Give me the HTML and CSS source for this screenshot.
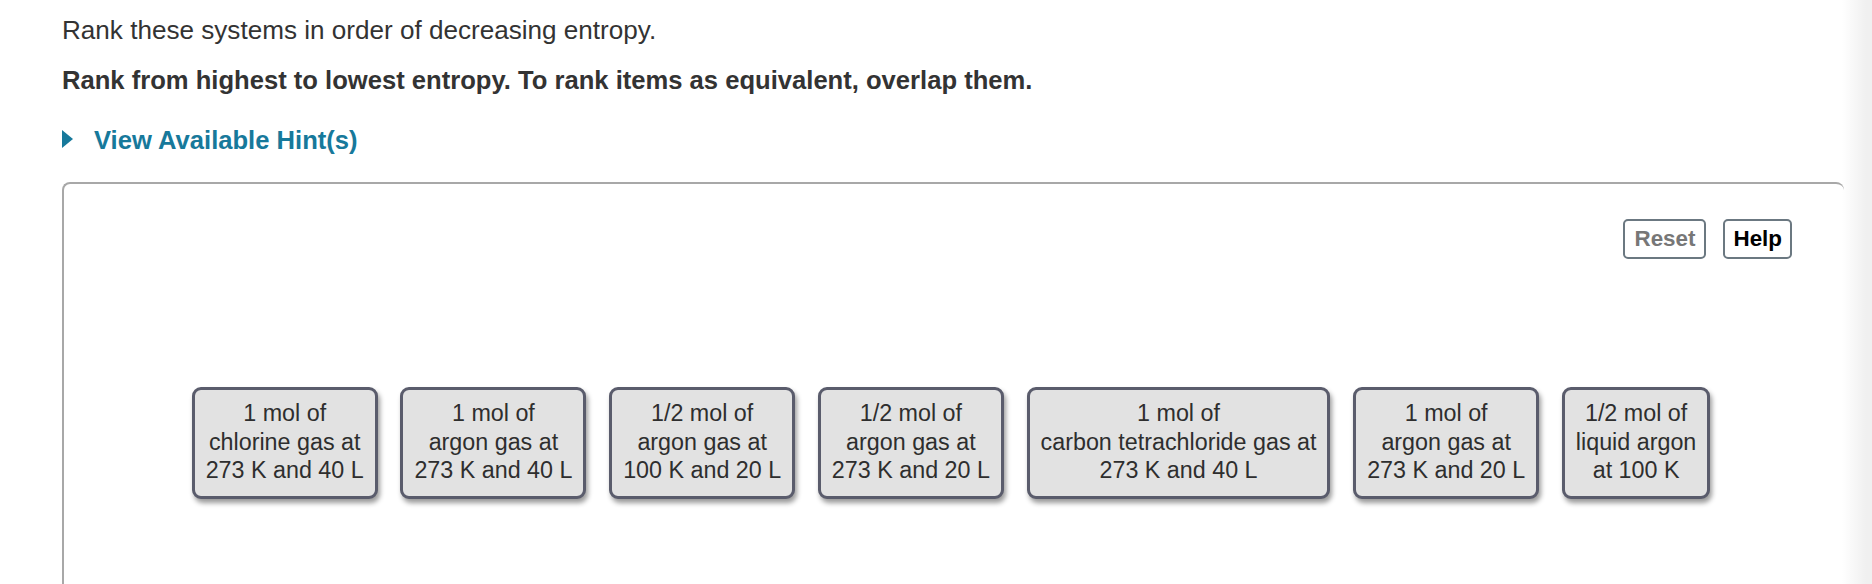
FILE: index.html
```html
<!DOCTYPE html>
<html lang="en">
<head>
    <meta charset="UTF-8">
    <meta name="viewport" content="width=device-width, initial-scale=1.0">
    <title>Ranking: Entropy</title>
    <link rel="stylesheet" href="styles.css">
</head>
<body>
    <div class="page">
        <p class="prompt">Rank these systems in order of decreasing entropy.</p>
        <p class="instructions">Rank from highest to lowest entropy. To rank items as equivalent, overlap them.</p>

        <a class="hint-toggle" href="#"><span class="arrow"></span>View Available Hint(s)</a>

        <!-- Ranking area -->
        <div class="ranking">
            <div class="toolbar">
                <button class="btn btn-reset">Reset</button>
                <button class="btn btn-help">Help</button>
            </div>
            <div class="items">
                <div class="item">1 mol of<br>chlorine gas at<br>273 K and 40 L</div>
                <div class="item">1 mol of<br>argon gas at<br>273 K and 40 L</div>
                <div class="item">1/2 mol of<br>argon gas at<br>100 K and 20 L</div>
                <div class="item">1/2 mol of<br>argon gas at<br>273 K and 20 L</div>
                <div class="item">1 mol of<br>carbon tetrachloride gas at<br>273 K and 40 L</div>
                <div class="item">1 mol of<br>argon gas at<br>273 K and 20 L</div>
                <div class="item">1/2 mol of<br>liquid argon<br>at 100 K</div>
            </div>
        </div>
    </div>
</body>
</html>
```

FILE: styles.css
```css
html, body {
    height: 100%;
}
body {
    margin: 0;
    font-family: "Liberation Sans", Arial, Helvetica, sans-serif;
    color: #333;
    background: linear-gradient(90deg, #fff calc(100% - 30px), #f0f0f0 calc(100% - 6px));
    overflow: hidden;
}
.page {
    padding: 16px 28px 0 62px;
}
.prompt, .instructions {
    margin: 0;
    font-size: 25.6px;
    line-height: 29px;
}
.prompt {
    font-size: 26.1px;
}
.instructions {
    margin-top: 21px;
    font-weight: bold;
}

/* hint link */
.hint-toggle {
    display: flex;
    align-items: center;
    gap: 21px;
    margin-top: 31px;
    font-size: 25.6px;
    line-height: 29px;
    font-weight: bold;
    color: #17799b;
    text-decoration: none;
}
.arrow {
    width: 0;
    height: 0;
    border-left: 11px solid #17799b;
    border-top: 9px solid transparent;
    border-bottom: 9px solid transparent;
    margin-bottom: 4px;
}

/* ranking widget */
.ranking {
    margin-top: 27px;
    min-height: 420px;
    border: 2px solid #a8a8a8;
    border-right-width: 0;
    border-bottom: none;
    border-radius: 8px 8px 0 0;
}
.toolbar {
    display: flex;
    justify-content: flex-end;
    gap: 17px;
    margin-top: 35px;
    padding-right: 52px;
}
.btn {
    font-family: inherit;
    font-size: 22.4px;
    font-weight: bold;
    line-height: 26px;
    padding: 5px 9px;
    background: #fff;
    border: 2px solid #6b7881;
    border-radius: 5px;
}
.btn-reset {
    color: #777;
}
.btn-help {
    color: #000;
    padding: 5px 8px;
}
.items {
    display: flex;
    justify-content: center;
    gap: 22.7px;
    margin-top: 128px;
    padding-right: 6px;
}
.item {
    font-size: 23.3px;
    line-height: 28.5px;
    text-align: center;
    white-space: nowrap;
    color: #2e2e2e;
    background: #e2e2e2;
    border: 3px solid #5a5c6c;
    border-radius: 9px;
    padding: 9px 11px 11px;
    box-shadow: 2px 4px 5px rgba(0, 0, 0, 0.4);
}
```
